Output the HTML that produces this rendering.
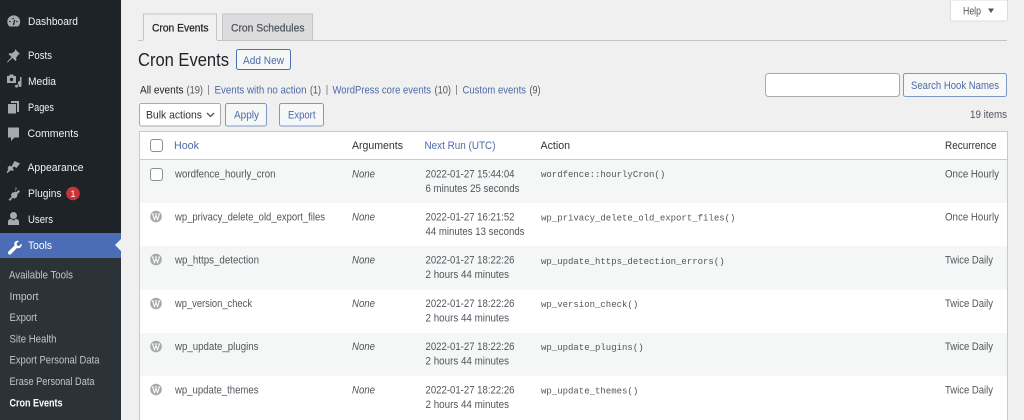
<!DOCTYPE html>
<html lang="en"><head><meta charset="utf-8"><title>Cron Events</title>
<style>
html,body{margin:0;padding:0;background:#f0f0f1;width:1024px;height:420px;overflow:hidden}
svg{display:block;font-family:"Liberation Sans",Arial,sans-serif;font-size:10.8px;filter:blur(.35px)}
.s{fill:#f0f0f1;font-size:11px}
.m{fill:#c3c4c7;font-size:10.6px}
.l{fill:#4f6aa8}
.g{fill:#50575e}
.d{fill:#2c3338}
.c{font-family:"Liberation Mono",monospace;font-size:9px;fill:#50575e}
.i{font-style:italic;fill:#50575e}
.ic{fill:#a7aaad}
</style></head><body>
<svg width="1024" height="420" viewBox="0 0 1024 420" xmlns="http://www.w3.org/2000/svg">
<rect width="1024" height="420" fill="#f0f0f1"/>
<rect width="121" height="420" fill="#1d2327"/>
<rect y="233" width="121" height="25" fill="#4a6db5"/>
<rect y="258" width="121" height="162" fill="#2c3338"/>
<path d="M121 239l-6 6 6 6z" fill="#f0f0f1"/>

<!-- sidebar icons -->
<path class="ic" d="M9.500 26.500a6.400 6.400 0 1 1 8.500 0z"/>
<path d="M13.500 25l1.200-5" stroke="#1d2327" stroke-width="1.300"/>
<circle cx="10" cy="21.500" r=".8" fill="#1d2327"/><circle cx="13" cy="18.500" r=".8" fill="#1d2327"/><circle cx="17" cy="21.500" r=".8" fill="#1d2327"/>
<path class="ic" d="M15 49l5 5-1.500 .5-2.500 3.500.5 2-1 1-3-3-5 4.500-.5-.5 4.500-5-3-3 1-1 2 .5 3.500-2.500z"/>
<path class="ic" d="M7 76h2l1-1.500h3l1 1.500h2v7H7zM16 85l4-1v-7h1.500v8.500a1.500 1.500 0 1 1-1.500-1.500v-3l-2 .5v4.500a1.500 1.500 0 1 1-2-1.300z"/>
<circle cx="11.500" cy="79.500" r="1.700" fill="#1d2327"/>
<path class="ic" d="M11 101h8v11h-2v-9h-6zM8 104h8v9.500H8z"/>
<path class="ic" d="M8 127.500h11v10h-4.500l-3.500 3.500v-3.500H8z"/>
<path class="ic" d="M14.500 161l5.500 2.500-3.500 4.500-2.500-1.500-1.500 1.500 1.500 2-2 1-1-1-3.500 3-1-.5 2-3.500-1-1 2-2.500 2 1z"/>
<path class="ic" d="M15.500 187l1.500 1.500-2.300 2.300 1.500 1.500 2.300-2.300 1.500 1.500-2.500 2.500-.5 3-2 1.500-2.500-.5-2.500 3-1.500-1.500 3-2.500-.5-2.500 1.500-2 3-.5z"/>
<circle class="ic" cx="13.500" cy="215.500" r="3.500"/>
<path class="ic" d="M8 225v-3.500c0-1.500 1.500-2.500 3-2.800l2.500 1.800 2.500-1.800c1.500.3 3 1.300 3 2.800V225z"/>
<path d="M8.500 251.500l6-6c-1-3 1.500-5.500 4.500-4.500l-2.500 2.500.5 2 2 .5 2.500-2.500c.8 3-1.500 5.500-4.500 4.500l-6 6a1.700 1.700 0 0 1-2.500-2.500z" fill="#fff"/>

<!-- sidebar text -->
<text class="s" x="28" y="25" textLength="50" lengthAdjust="spacingAndGlyphs">Dashboard</text>
<text class="s" x="28" y="59" textLength="24" lengthAdjust="spacingAndGlyphs">Posts</text>
<text class="s" x="28" y="85" textLength="28" lengthAdjust="spacingAndGlyphs">Media</text>
<text class="s" x="28" y="111" textLength="26" lengthAdjust="spacingAndGlyphs">Pages</text>
<text class="s" x="27.500" y="137" textLength="51" lengthAdjust="spacingAndGlyphs">Comments</text>
<text class="s" x="27.500" y="171" textLength="56" lengthAdjust="spacingAndGlyphs">Appearance</text>
<text class="s" x="28" y="197" textLength="33.500" lengthAdjust="spacingAndGlyphs">Plugins</text>
<circle cx="73" cy="193.500" r="6.800" fill="#c9343a"/>
<text x="73" y="197" text-anchor="middle" fill="#fff" font-size="9">1</text>
<text class="s" x="28" y="223" textLength="25" lengthAdjust="spacingAndGlyphs">Users</text>
<text x="28" y="249" fill="#fff" font-size="11" textLength="24" lengthAdjust="spacingAndGlyphs">Tools</text>
<text class="m" x="9" y="278.500" textLength="64" lengthAdjust="spacingAndGlyphs">Available Tools</text>
<text class="m" x="9.500" y="300" textLength="29" lengthAdjust="spacingAndGlyphs">Import</text>
<text class="m" x="9.500" y="321" textLength="27.500" lengthAdjust="spacingAndGlyphs">Export</text>
<text class="m" x="9.500" y="342.500" textLength="47" lengthAdjust="spacingAndGlyphs">Site Health</text>
<text class="m" x="9.500" y="363.500" textLength="90" lengthAdjust="spacingAndGlyphs">Export Personal Data</text>
<text class="m" x="9.500" y="385" textLength="85" lengthAdjust="spacingAndGlyphs">Erase Personal Data</text>
<text x="9.500" y="406.500" fill="#fff" font-weight="bold" font-size="10.600" textLength="53" lengthAdjust="spacingAndGlyphs">Cron Events</text>

<!-- help -->
<path d="M950.500 0v19a2 2 0 0 0 2 2h53a2 2 0 0 0 2-2V0z" fill="#fff" stroke="#dcdcde"/>
<text class="g" x="963" y="14.500" font-size="11" textLength="18" lengthAdjust="spacingAndGlyphs">Help</text>
<path d="M988 8.500h6l-3 4.500z" fill="#50575e"/>

<!-- tabs -->
<path d="M138 40.500H1007" stroke="#c3c4c7"/>
<path d="M143.500 41V14h73v27z" fill="#f0f0f1" stroke="#c3c4c7"/>
<rect x="143" y="40" width="74" height="2" fill="#f0f0f1"/>
<path d="M222.500 40.500V14h90v26.500z" fill="#dcdcde" stroke="#c3c4c7"/>
<text x="152" y="31.500" fill="#1d2327" stroke="#1d2327" stroke-width=".25" font-size="11" textLength="56.500" lengthAdjust="spacingAndGlyphs">Cron Events</text>
<text x="231" y="31.500" fill="#50575e" stroke="#50575e" stroke-width=".25" font-size="11" textLength="73.500" lengthAdjust="spacingAndGlyphs">Cron Schedules</text>

<!-- heading -->
<text x="138" y="66" fill="#1d2327" font-size="18.400" textLength="91" lengthAdjust="spacingAndGlyphs">Cron Events</text>
<rect x="236.500" y="49.500" width="54" height="20" rx="2" fill="#f6f7f7" stroke="#4f6fb5"/>
<text class="l" x="243" y="64" textLength="41" lengthAdjust="spacingAndGlyphs">Add New</text>

<!-- views -->
<text x="140" y="93.500" fill="#1d2327" textLength="43.500" lengthAdjust="spacingAndGlyphs">All events</text>
<text class="g" x="186.500" y="93.500" textLength="16.500" lengthAdjust="spacingAndGlyphs">(19)</text>
<rect x="208" y="85" width="1" height="10" fill="#8c8f94"/>
<text class="l" x="214.500" y="93.500" textLength="92" lengthAdjust="spacingAndGlyphs">Events with no action</text>
<text class="g" x="310" y="93.500" textLength="11" lengthAdjust="spacingAndGlyphs">(1)</text>
<rect x="326.500" y="85" width="1" height="10" fill="#8c8f94"/>
<text class="l" x="332.500" y="93.500" textLength="98.500" lengthAdjust="spacingAndGlyphs">WordPress core events</text>
<text class="g" x="434.500" y="93.500" textLength="16.500" lengthAdjust="spacingAndGlyphs">(10)</text>
<rect x="456" y="85" width="1" height="10" fill="#8c8f94"/>
<text class="l" x="462.500" y="93.500" textLength="63.500" lengthAdjust="spacingAndGlyphs">Custom events</text>
<text class="g" x="529.500" y="93.500" textLength="11" lengthAdjust="spacingAndGlyphs">(9)</text>

<!-- search -->
<rect x="765.500" y="73.500" width="134" height="23" rx="3" fill="#fff" stroke="#a7aaad"/>
<rect x="903.500" y="73.500" width="103" height="23" rx="2" fill="#f6f7f7" stroke="#7f97c9"/>
<text class="l" x="911" y="89" textLength="88" lengthAdjust="spacingAndGlyphs">Search Hook Names</text>

<!-- actions -->
<rect x="139.500" y="103.500" width="81" height="22.500" rx="2" fill="#fff" stroke="#a7aaad"/>
<text x="146" y="118.500" fill="#2c3338" textLength="56" lengthAdjust="spacingAndGlyphs">Bulk actions</text>
<path d="M207 113l3.500 3.500 3.500-3.500" fill="none" stroke="#50575e" stroke-width="1.300"/>
<rect x="225.500" y="103.500" width="41" height="22.500" rx="2" fill="#f6f7f7" stroke="#7f97c9"/>
<text class="l" x="234" y="118.500" textLength="25" lengthAdjust="spacingAndGlyphs">Apply</text>
<rect x="279.500" y="103.500" width="44" height="22.500" rx="2" fill="#f6f7f7" stroke="#7f97c9"/>
<text class="l" x="288" y="118.500" textLength="27.500" lengthAdjust="spacingAndGlyphs">Export</text>
<text class="g" x="970" y="118" textLength="37" lengthAdjust="spacingAndGlyphs">19 items</text>

<!-- table -->
<rect x="139" y="131" width="869" height="289" fill="#fff"/>
<rect x="140" y="160" width="867" height="43" fill="#f5f6f6"/>
<rect x="140" y="246" width="867" height="43.500" fill="#f5f6f6"/>
<rect x="140" y="333" width="867" height="43" fill="#f5f6f6"/>
<path d="M139.500 420V131.500H1007.500V420" fill="none" stroke="#c9cacc"/>
<path d="M140 159.500H1007" stroke="#c9cacc"/>

<rect x="150.500" y="139.500" width="12" height="12" rx="2.500" fill="#fff" stroke="#8c8f94"/>
<text class="l" x="174" y="149" textLength="25" lengthAdjust="spacingAndGlyphs">Hook</text>
<text class="d" x="352" y="149" textLength="51" lengthAdjust="spacingAndGlyphs">Arguments</text>
<text class="l" x="424.500" y="149" textLength="71" lengthAdjust="spacingAndGlyphs">Next Run (UTC)</text>
<text class="d" x="540.500" y="149" textLength="29.500" lengthAdjust="spacingAndGlyphs">Action</text>
<text class="d" x="945" y="149" textLength="51.500" lengthAdjust="spacingAndGlyphs">Recurrence</text>

<!-- row 1 -->
<rect x="150.500" y="168.500" width="12" height="12" rx="2.500" fill="#fff" stroke="#8c8f94"/>
<text class="g" x="175" y="177.500" textLength="100.500" lengthAdjust="spacingAndGlyphs">wordfence_hourly_cron</text>
<text class="i" x="352" y="177.500" textLength="23" lengthAdjust="spacingAndGlyphs">None</text>
<text class="g" x="425.500" y="177.500" textLength="89" lengthAdjust="spacingAndGlyphs">2022-01-27 15:44:04</text>
<text class="g" x="425.500" y="192" textLength="94" lengthAdjust="spacingAndGlyphs">6 minutes 25 seconds</text>
<text class="c" x="541" y="177">wordfence::hourlyCron()</text>
<text class="g" x="945" y="177.500" textLength="54" lengthAdjust="spacingAndGlyphs">Once Hourly</text>

<!-- row 2 -->
<g id="w2"><circle class="ic" cx="156" cy="216.500" r="5.800"/><path d="M152.500 214l2 5.500 1.500-4 1.500 4 2-5.500M151.800 214h2M155 214h2M158.300 214h1.800" fill="none" stroke="#fff" stroke-width="1"/></g>
<text class="g" x="175" y="220.500" textLength="150" lengthAdjust="spacingAndGlyphs">wp_privacy_delete_old_export_files</text>
<text class="i" x="352" y="220.500" textLength="23" lengthAdjust="spacingAndGlyphs">None</text>
<text class="g" x="425.500" y="220.500" textLength="89" lengthAdjust="spacingAndGlyphs">2022-01-27 16:21:52</text>
<text class="g" x="425.500" y="235" textLength="99" lengthAdjust="spacingAndGlyphs">44 minutes 13 seconds</text>
<text class="c" x="541" y="220.500">wp_privacy_delete_old_export_files()</text>
<text class="g" x="945" y="220.500" textLength="54" lengthAdjust="spacingAndGlyphs">Once Hourly</text>

<!-- row 3 -->
<use href="#w2" y="43"/>
<text class="g" x="175" y="263.500" textLength="84" lengthAdjust="spacingAndGlyphs">wp_https_detection</text>
<text class="i" x="352" y="263.500" textLength="23" lengthAdjust="spacingAndGlyphs">None</text>
<text class="g" x="425.500" y="263.500" textLength="89" lengthAdjust="spacingAndGlyphs">2022-01-27 18:22:26</text>
<text class="g" x="425.500" y="278" textLength="83.500" lengthAdjust="spacingAndGlyphs">2 hours 44 minutes</text>
<text class="c" x="541" y="264">wp_update_https_detection_errors()</text>
<text class="g" x="945" y="263.500" textLength="48" lengthAdjust="spacingAndGlyphs">Twice Daily</text>

<!-- row 4 -->
<use href="#w2" y="87"/>
<text class="g" x="175" y="307" textLength="77" lengthAdjust="spacingAndGlyphs">wp_version_check</text>
<text class="i" x="352" y="307" textLength="23" lengthAdjust="spacingAndGlyphs">None</text>
<text class="g" x="425.500" y="307" textLength="89" lengthAdjust="spacingAndGlyphs">2022-01-27 18:22:26</text>
<text class="g" x="425.500" y="321.500" textLength="83.500" lengthAdjust="spacingAndGlyphs">2 hours 44 minutes</text>
<text class="c" x="541" y="307">wp_version_check()</text>
<text class="g" x="945" y="307" textLength="48" lengthAdjust="spacingAndGlyphs">Twice Daily</text>

<!-- row 5 -->
<use href="#w2" y="130"/>
<text class="g" x="175" y="350" textLength="83.500" lengthAdjust="spacingAndGlyphs">wp_update_plugins</text>
<text class="i" x="352" y="350" textLength="23" lengthAdjust="spacingAndGlyphs">None</text>
<text class="g" x="425.500" y="350" textLength="89" lengthAdjust="spacingAndGlyphs">2022-01-27 18:22:26</text>
<text class="g" x="425.500" y="364.500" textLength="83.500" lengthAdjust="spacingAndGlyphs">2 hours 44 minutes</text>
<text class="c" x="541" y="350">wp_update_plugins()</text>
<text class="g" x="945" y="350" textLength="48" lengthAdjust="spacingAndGlyphs">Twice Daily</text>

<!-- row 6 -->
<use href="#w2" y="173"/>
<text class="g" x="175" y="393.500" textLength="83.500" lengthAdjust="spacingAndGlyphs">wp_update_themes</text>
<text class="i" x="352" y="393.500" textLength="23" lengthAdjust="spacingAndGlyphs">None</text>
<text class="g" x="425.500" y="393.500" textLength="89" lengthAdjust="spacingAndGlyphs">2022-01-27 18:22:26</text>
<text class="g" x="425.500" y="408" textLength="83.500" lengthAdjust="spacingAndGlyphs">2 hours 44 minutes</text>
<text class="c" x="541" y="393.500">wp_update_themes()</text>
<text class="g" x="945" y="393.500" textLength="48" lengthAdjust="spacingAndGlyphs">Twice Daily</text>
</svg>
</body></html>
